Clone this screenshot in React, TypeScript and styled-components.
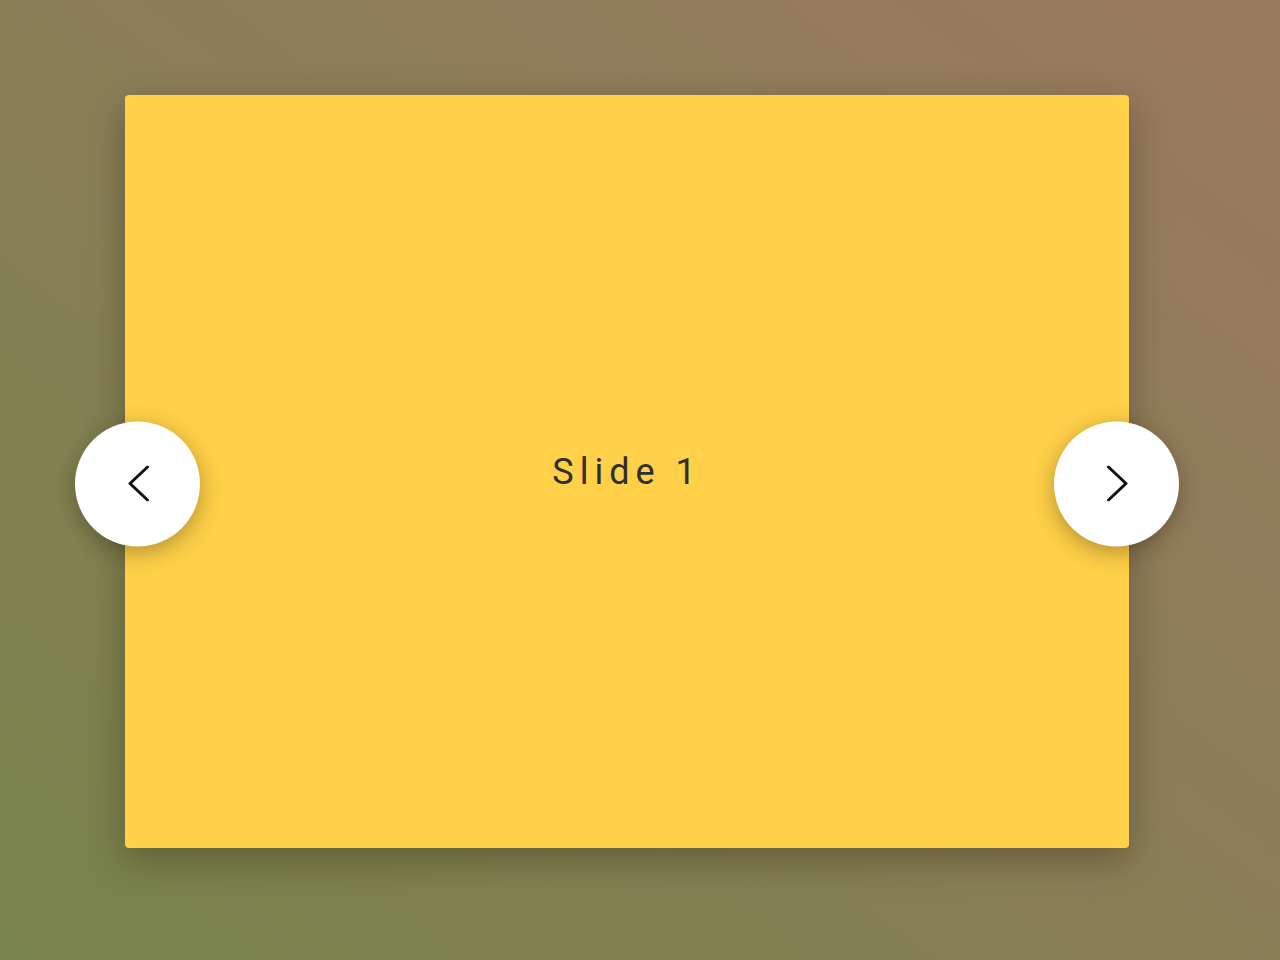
import React, { useState } from 'react';
import styled, { createGlobalStyle } from 'styled-components';

const GlobalStyle = createGlobalStyle`
  html, body {
    margin: 0;
    padding: 0;
    height: 100%;
  }
  body {
    font-family: Roboto, "Liberation Sans", sans-serif;
    background: linear-gradient(to top right, #778349 0%, #8a7e57 50%, #997a5f 100%);
    background-attachment: fixed;
  }
`;

const Page = styled.div`
  box-sizing: border-box;
  width: 1280px;
  height: 960px;
  padding: 95px 151px 112px 125px;
  display: flex;
`;

const Carousel = styled.section`
  position: relative;
  flex: 1;
  display: flex;
`;

const Slide = styled.div<{ $color: string }>`
  flex: 1;
  display: flex;
  align-items: center;
  justify-content: center;
  background: ${({ $color }) => $color};
  border-radius: 4px;
  box-shadow: 0 12px 36px rgba(40, 30, 10, 0.35);
`;

const SlideLabel = styled.h2`
  margin: 0;
  font-size: 36px;
  font-weight: 400;
  letter-spacing: 6px;
  color: #2e2f30;
`;

const NavButton = styled.button<{ $side: 'left' | 'right' }>`
  position: absolute;
  top: 50%;
  ${({ $side }) => ($side === 'left' ? 'left: -50px;' : 'right: -50px;')}
  transform: translateY(-50%);
  margin-top: 12px;
  width: 125px;
  height: 125px;
  border: none;
  border-radius: 50%;
  background: #ffffff;
  box-shadow: 0 6px 22px rgba(40, 30, 10, 0.35);
  display: flex;
  align-items: center;
  justify-content: center;
  cursor: pointer;
  padding: 0;
  svg {
    width: 36px;
    height: 36px;
  }
`;

const Chevron: React.FC<{ dir: 'left' | 'right' }> = ({ dir }) => (
  <svg viewBox="0 0 36 36" fill="none" stroke="#111" strokeWidth={3} strokeLinecap="round" strokeLinejoin="round">
    {dir === 'left' ? <path d="M27.5 1.5 L10 18 L27.5 34.5" /> : <path d="M9.5 1.5 L27 18 L9.5 34.5" />}
  </svg>
);

const slides = ['#ffd048', '#6fc3df', '#f28b82'];

const App: React.FC = () => {
  const [index, setIndex] = useState(0);
  const prev = () => setIndex((i) => (i + slides.length - 1) % slides.length);
  const next = () => setIndex((i) => (i + 1) % slides.length);

  return (
    <>
      <GlobalStyle />
      <Page>
        <Carousel>
          <Slide $color={slides[index]}>
            <SlideLabel>Slide {index + 1}</SlideLabel>
          </Slide>
          <NavButton $side="left" onClick={prev} aria-label="Previous slide">
            <Chevron dir="left" />
          </NavButton>
          <NavButton $side="right" onClick={next} aria-label="Next slide">
            <Chevron dir="right" />
          </NavButton>
        </Carousel>
      </Page>
    </>
  );
};

export default App;
